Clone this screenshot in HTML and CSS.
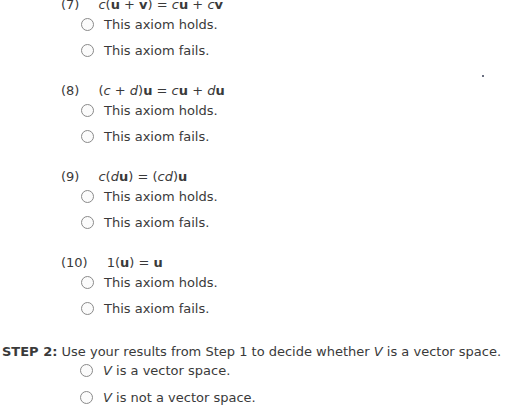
FILE: index.html
```html
<!DOCTYPE html>
<html>
<head>
<meta charset="utf-8">
<link rel="stylesheet" href="styles.css">
</head>
<body>
<div class="page">
  <div class="q">
    <div class="qhead"><span class="num">(7)</span><span class="expr"><i>c</i>(<b>u</b> + <b>v</b>) = <i>c</i><b>u</b> + <i>c</i><b>v</b></span></div>
    <ul class="opts">
      <li><span class="radio"></span>This axiom holds.</li>
      <li><span class="radio"></span>This axiom fails.</li>
    </ul>
  </div>
  <div class="q">
    <div class="qhead"><span class="num">(8)</span><span class="expr">(<i>c</i> + <i>d</i>)<b>u</b> = <i>c</i><b>u</b> + <i>d</i><b>u</b></span></div>
    <ul class="opts">
      <li><span class="radio"></span>This axiom holds.</li>
      <li><span class="radio"></span>This axiom fails.</li>
    </ul>
  </div>
  <div class="q">
    <div class="qhead"><span class="num">(9)</span><span class="expr"><i>c</i>(<i>d</i><b>u</b>) = (<i>cd</i>)<b>u</b></span></div>
    <ul class="opts">
      <li><span class="radio"></span>This axiom holds.</li>
      <li><span class="radio"></span>This axiom fails.</li>
    </ul>
  </div>
  <div class="q">
    <div class="qhead"><span class="num">(10)</span><span class="expr">1(<b>u</b>) = <b>u</b></span></div>
    <ul class="opts">
      <li><span class="radio"></span>This axiom holds.</li>
      <li><span class="radio"></span>This axiom fails.</li>
    </ul>
  </div>
  <div class="step">
    <p class="steptext"><b>STEP 2:</b> Use your results from Step 1 to decide whether <i>V</i> is a vector space.</p>
    <ul class="opts opts-step">
      <li><span class="radio"></span><i>V</i>&nbsp;is a vector space.</li>
      <li><span class="radio"></span><i>V</i>&nbsp;is not a vector space.</li>
    </ul>
  </div>
  <span class="speck"></span>
</div>
</body>
</html>
```

FILE: styles.css
```css
html, body {
  margin: 0;
  padding: 0;
  background: #ffffff;
}
body {
  font-family: Verdana, "DejaVu Sans", sans-serif;
  font-size: 13px;
  line-height: 19px;
  color: #3a3a3a;
}
.page {
  position: relative;
  margin-top: -5px;
}
.q {
  margin-bottom: 21px;
}
.qhead {
  display: flex;
  padding-left: 61px;
  height: 20px;
}
.num {
  margin-right: 19px;
}
.expr b {
  font-weight: bold;
}
.opts {
  list-style: none;
  margin: 0;
  padding: 0 0 0 81px;
  display: flex;
  flex-direction: column;
  gap: 7px;
}
.opts li {
  display: flex;
  align-items: center;
}
.radio {
  width: 11px;
  height: 11px;
  border: 1px solid #8a8a8a;
  border-radius: 50%;
  background: #fbfbfb;
  margin-right: 10px;
  flex: none;
}
.step {
  margin-top: 24px;
}
.steptext {
  margin: 0;
  padding-left: 2px;
}
.opts-step {
  padding-left: 80px;
  margin-top: 0;
  gap: 8px;
}
.speck {
  position: absolute;
  left: 482px;
  top: 80px;
  width: 2px;
  height: 2px;
  background: #6a6f80;
}
```
